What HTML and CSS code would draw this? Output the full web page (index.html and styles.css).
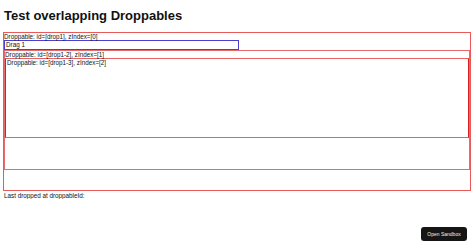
FILE: index.html
```html
<!DOCTYPE html>
<html>
<head>
<meta charset="utf-8">
<link rel="stylesheet" href="styles.css">
</head>
<body>
<h1 class="title">Test overlapping Droppables</h1>
<div class="drop drop1">
  <div class="label">Droppable: id=[drop1], zIndex=[0]</div>
  <div class="drag">Drag 1</div>
  <div class="drop drop2">
    <div class="label">Droppable: id=[drop1-2], zIndex=[1]</div>
    <div class="drop drop3">
      <div class="label">Droppable: id=[drop1-3], zIndex=[2]</div>
    </div>
  </div>
</div>
<div class="status">Last dropped at droppableId:</div>
<button class="sandbox">Open Sandbox</button>
</body>
</html>
```
FILE: styles.css
```css
html, body {
  margin: 0;
  padding: 0;
  background: #fff;
}
body {
  padding-left: 3px;
  font-family: "Liberation Sans", Arial, sans-serif;
  color: #111;
  width: 468px;
}
.title {
  margin: 0;
  padding-top: 9px;
  font-size: 13px;
  font-weight: bold;
  line-height: 14px;
  height: 23px;
  padding-left: 1px;
}
.label {
  font-size: 6.3px;
  line-height: 7px;
  height: 7px;
  white-space: nowrap;
}
.drop {
  box-sizing: border-box;
  border: 1px solid #e85a5a;
}
.drop1 {
  width: 468px;
  height: 159px;
}
.drag {
  box-sizing: border-box;
  width: 235px;
  height: 10px;
  border: 1px solid #4a3fd0;
  font-size: 6.3px;
  line-height: 7px;
  padding-left: 1px;
  background: #fff;
}
.drop2 {
  height: 120px;
  border-color: #e86a6a;
}
.drop3 {
  height: 80px;
  border-color: #e86060;
  border-left-color: #d42020;
  border-right-color: #d42020;
}
.drop3 .label {
  padding-left: 1px;
}
.status {
  margin-top: 1px;
  font-size: 6.3px;
  line-height: 7px;
  padding-left: 1px;
}
.sandbox {
  position: absolute;
  left: 421px;
  top: 227px;
  width: 46px;
  height: 14px;
  padding: 0;
  border: none;
  border-radius: 3px;
  background: #151515;
  color: #f0f0f0;
  font-family: "Liberation Sans", Arial, sans-serif;
  font-size: 5px;
  line-height: 14px;
  text-align: center;
}
```
